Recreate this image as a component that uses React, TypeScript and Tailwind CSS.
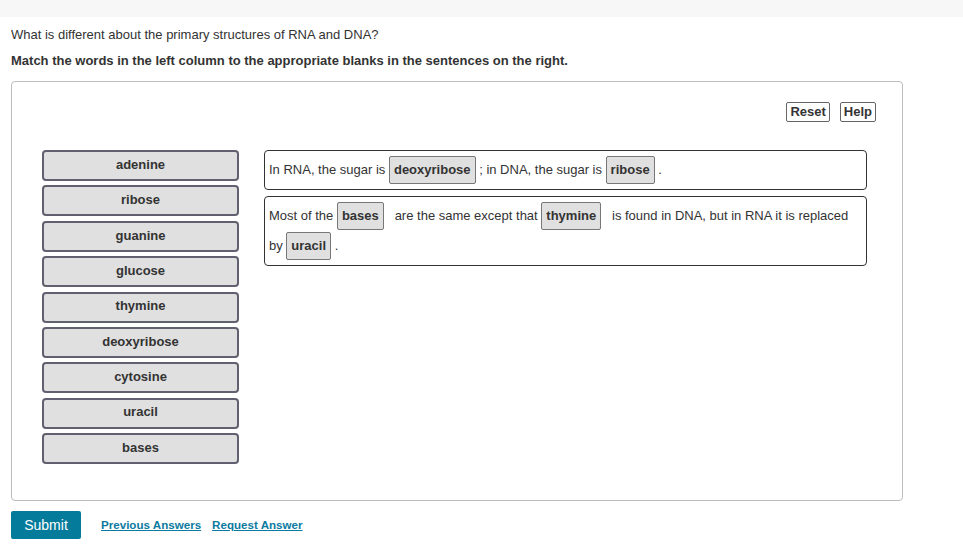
import React from "react";

const words = ["adenine", "ribose", "guanine", "glucose", "thymine", "deoxyribose", "cytosine", "uracil", "bases"];

function Blank({ children }: { children: React.ReactNode }) {
  return (
    <span className="inline-flex h-[28px] items-center rounded-[2px] border border-[#777] bg-[#e0e0e0] px-[4px] font-bold text-[#333]">
      {children}
    </span>
  );
}

export default function App() {
  return (
    <div className="min-h-[548px] w-[963px] bg-white text-[13px] text-[#333]" style={{ fontFamily: '"Liberation Sans", Arial, sans-serif' }}>
      <div className="h-[17px] bg-[#f7f7f7]" />
      <div className="pl-[11px]">
        <p className="mt-[10px] leading-[16px]">What is different about the primary structures of RNA and DNA?</p>
        <p className="mt-[10px] font-bold leading-[16px]">Match the words in the left column to the appropriate blanks in the sentences on the right.</p>
        <div className="mt-[12px] h-[420px] w-[892px] rounded-[4px] border border-[#bdbdbd] pl-[30px] pr-[26px] pt-[20px]">
          <div className="flex justify-end gap-[10px]">
            <button className="h-[20px] rounded-[2px] border border-[#666] bg-white px-[3px] text-[13px] font-bold leading-[18px] text-[#333]">Reset</button>
            <button className="h-[20px] rounded-[2px] border border-[#666] bg-white px-[3px] text-[13px] font-bold leading-[18px] text-[#333]">Help</button>
          </div>
          <div className="mt-[28px] flex gap-[25px]">
            <div className="flex w-[197px] flex-col gap-[4.4px]">
              {words.map((w) => (
                <div key={w} className="flex h-[31px] items-center justify-center rounded-[4px] border-2 border-[#606070] bg-[#e0e0e0] pb-[2px] text-[13px] font-bold text-[#333]">
                  {w}
                </div>
              ))}
            </div>
            <div className="flex w-[603px] flex-col gap-[6px]">
              <div className="flex h-[40px] items-center whitespace-nowrap rounded-[4px] border-[1.5px] border-[#333] px-[4px]">
                <span>In RNA, the sugar is&nbsp;</span>
                <Blank>deoxyribose</Blank>
                <span>&nbsp;; in DNA, the sugar is&nbsp;</span>
                <Blank>ribose</Blank>
                <span>&nbsp;.</span>
              </div>
              <div className="flex h-[70px] flex-col justify-center gap-[2px] whitespace-nowrap rounded-[4px] border-[1.5px] border-[#333] px-[4px]">
                <div className="flex items-center">
                  <span>Most of the&nbsp;</span>
                  <Blank>bases</Blank>
                  <span>&nbsp;&nbsp; are the same except that&nbsp;</span>
                  <Blank>thymine</Blank>
                  <span>&nbsp;&nbsp; is found in DNA, but in RNA it is replaced</span>
                </div>
                <div className="flex items-center">
                  <span>by&nbsp;</span>
                  <Blank>uracil</Blank>
                  <span>&nbsp;.</span>
                </div>
              </div>
            </div>
          </div>
        </div>
        <div className="mt-[10px] flex items-center">
          <button className="h-[28px] w-[70px] rounded-[2px] bg-[#057b9c] text-[14px] text-white">Submit</button>
          <a className="ml-[20px] text-[11.6px] font-bold text-[#0b7aa0] underline">Previous Answers</a>
          <a className="ml-[11px] text-[11.6px] font-bold text-[#0b7aa0] underline">Request Answer</a>
        </div>
      </div>
    </div>
  );
}
